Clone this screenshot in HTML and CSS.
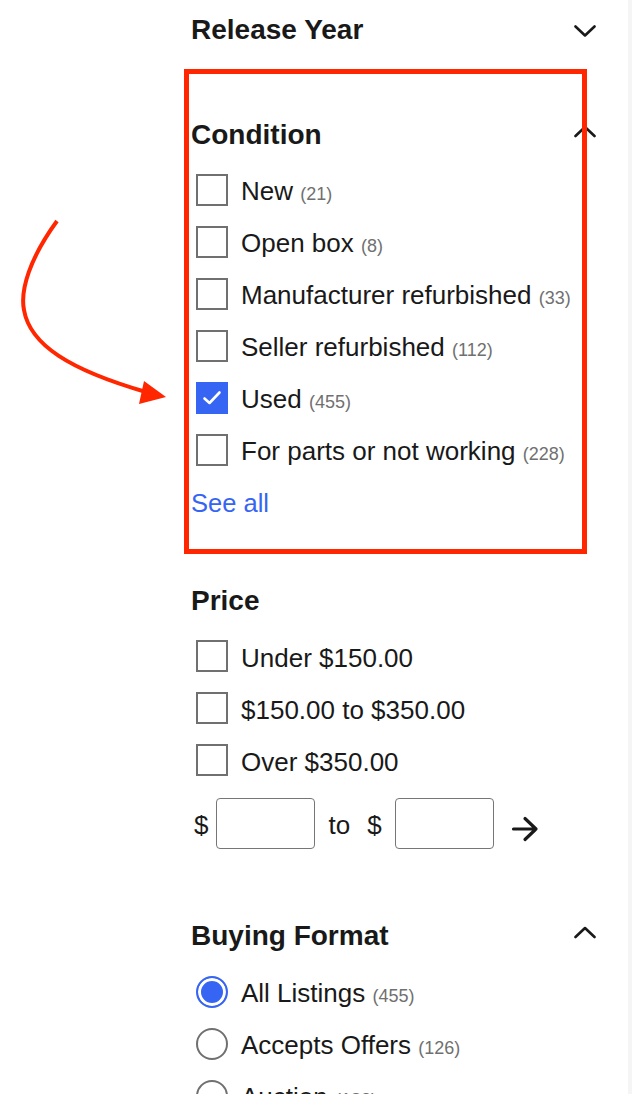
FILE: index.html
```html
<!DOCTYPE html>
<html lang="en">
<head>
<meta charset="utf-8">
<title>Filters</title>
<link rel="stylesheet" href="styles.css">
</head>
<body>
<div class="page">
  <section class="facet facet-release">
    <div class="facet-head">
      <h2>Release Year</h2>
      <svg class="chev" width="22" height="24" viewBox="0 0 22 24"><path d="M1.5 9.5 L11 18.5 L20.5 9.5" fill="none" stroke="#191919" stroke-width="2.6" stroke-linecap="round" stroke-linejoin="round"/></svg>
    </div>
  </section>

  <section class="facet facet-condition">
    <div class="facet-head">
      <h2>Condition</h2>
      <svg class="chev" width="22" height="24" viewBox="0 0 22 24"><path d="M1.5 14 L11 5 L20.5 14" fill="none" stroke="#191919" stroke-width="2.6" stroke-linecap="round" stroke-linejoin="round"/></svg>
    </div>
    <ul class="options">
      <li class="option"><span class="box"></span><span class="label">New <span class="count">(21)</span></span></li>
      <li class="option"><span class="box"></span><span class="label">Open box <span class="count">(8)</span></span></li>
      <li class="option"><span class="box"></span><span class="label">Manufacturer refurbished <span class="count">(33)</span></span></li>
      <li class="option"><span class="box"></span><span class="label">Seller refurbished <span class="count">(112)</span></span></li>
      <li class="option"><span class="box box-checked"><svg width="32" height="32" viewBox="0 0 32 32"><path d="M8.5 16.5 L13.5 21 L23.5 10.5" fill="none" stroke="#fff" stroke-width="2.6" stroke-linecap="round" stroke-linejoin="round"/></svg></span><span class="label">Used <span class="count">(455)</span></span></li>
      <li class="option"><span class="box"></span><span class="label">For parts or not working <span class="count">(228)</span></span></li>
    </ul>
    <a class="see-all" href="#">See all</a>
  </section>

  <section class="facet facet-price">
    <div class="facet-head">
      <h2>Price</h2>
    </div>
    <ul class="options">
      <li class="option"><span class="box"></span><span class="label">Under $150.00</span></li>
      <li class="option"><span class="box"></span><span class="label">$150.00 to $350.00</span></li>
      <li class="option"><span class="box"></span><span class="label">Over $350.00</span></li>
    </ul>
    <div class="range">
      <span class="cur cur-first">$</span>
      <span class="field"></span>
      <span class="to">to</span>
      <span class="cur cur-second">$</span>
      <span class="field"></span>
      <svg class="go" width="28" height="28" viewBox="0 0 28 28"><path d="M2.5 14 H25 M14 3.5 L25 14 L14 24.5" fill="none" stroke="#191919" stroke-width="3.2" stroke-linecap="round" stroke-linejoin="round"/></svg>
    </div>
  </section>

  <section class="facet facet-format">
    <div class="facet-head">
      <h2>Buying Format</h2>
      <svg class="chev" width="22" height="24" viewBox="0 0 22 24"><path d="M1.5 14 L11 5 L20.5 14" fill="none" stroke="#191919" stroke-width="2.6" stroke-linecap="round" stroke-linejoin="round"/></svg>
    </div>
    <ul class="options">
      <li class="option"><span class="radio radio-on"></span><span class="label">All Listings <span class="count">(455)</span></span></li>
      <li class="option"><span class="radio"></span><span class="label">Accepts Offers <span class="count">(126)</span></span></li>
      <li class="option"><span class="radio"></span><span class="label">Auction <span class="count">(183)</span></span></li>
    </ul>
  </section>

  <div class="annot-box"></div>
  <svg class="annot-arrow" width="180" height="220" viewBox="0 200 180 220">
    <path d="M57 221 C30 258, 20 290, 24 310 C30 345, 70 370, 146 392" fill="none" stroke="#ff2600" stroke-width="4"/>
    <polygon points="166,397 144,381 139,404" fill="#ff2600"/>
  </svg>
</div>
</body>
</html>
```

FILE: styles.css
```css
* { box-sizing: border-box; }

html, body {
  margin: 0;
  padding: 0;
  background: #ffffff;
}

body {
  font-family: "Liberation Sans", Arial, sans-serif;
  color: #191919;
  overflow: hidden;
  height: 1094px;
}

.page {
  position: relative;
  width: 632px;
  height: 1094px;
  overflow: hidden;
  padding: 12px 34px 0 191px;
  border-right: 4px solid #f5f5f5;
}

.facet-head {
  display: flex;
  align-items: center;
  justify-content: space-between;
  height: 34px;
}

.facet-head h2 {
  margin: 0;
  font-size: 28px;
  line-height: 34px;
  padding-top: 2px;
  font-weight: 700;
  color: #191919;
}

.chev {
  margin-right: -2px;
  display: block;
}

.facet-condition { margin-top: 71px; }
.facet-price { margin-top: 64px; }
.facet-format { margin-top: 69px; }

.options {
  list-style: none;
  margin: 23px 0 0 0;
  padding: 0;
  display: flex;
  flex-direction: column;
  gap: 20px;
}

.facet-format .options { margin-top: 24px; }

.option {
  display: flex;
  align-items: center;
  height: 32px;
  margin-left: 5px;
}

.box {
  width: 32px;
  height: 32px;
  border: 2px solid #707070;
  flex: none;
  display: flex;
  align-items: center;
  justify-content: center;
}

.box-checked {
  background: #3665f3;
  border-color: #3665f3;
}

.box-checked svg { display: block; flex: none; }

.radio {
  width: 32px;
  height: 32px;
  border-radius: 50%;
  border: 2px solid #707070;
  flex: none;
}

.radio-on {
  border-color: #3665f3;
  background: #3665f3;
  box-shadow: inset 0 0 0 3px #ffffff;
}

.label {
  margin-left: 13px;
  font-size: 26px;
  line-height: 32px;
  padding-top: 4px;
  white-space: nowrap;
  color: #191919;
}

.count {
  font-size: 18px;
  color: #707070;
}

.see-all {
  display: block;
  margin-top: 21px;
  font-size: 25.5px;
  line-height: 32px;
  color: #3665f3;
  text-decoration: none;
}

.range {
  display: flex;
  align-items: center;
  margin-top: 22px;
  height: 51px;
  font-size: 26px;
  padding-top: 4px;
}

.cur-first { margin-left: 3px; }
.cur-second { margin-left: 17px; }
.to { margin-left: 13px; }

.field {
  width: 99px;
  height: 51px;
  border: 1px solid #767676;
  border-radius: 4px;
  margin-left: 8px;
  margin-top: -4px;
}

.cur-second + .field { margin-left: 13px; }

.go {
  display: block;
  margin-left: 17px;
  margin-top: 7px;
}

.annot-box {
  position: absolute;
  left: 184px;
  top: 69px;
  width: 403px;
  height: 485px;
  border: 5px solid #ff2600;
}

.annot-arrow {
  position: absolute;
  left: 0;
  top: 200px;
  width: 180px;
  height: 220px;
  overflow: visible;
}
```
